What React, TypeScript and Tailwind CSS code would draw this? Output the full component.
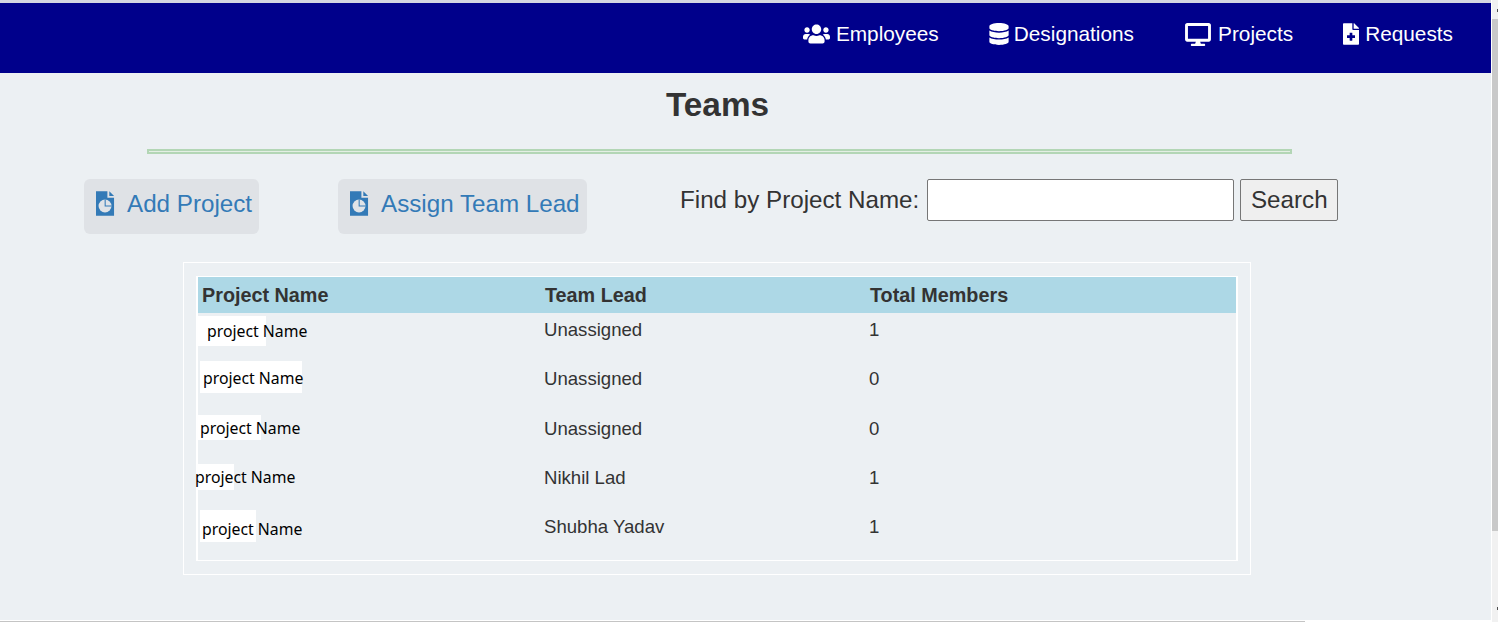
import React from 'react';
import { FaUsers, FaDatabase, FaDesktop, FaFileMedical } from 'react-icons/fa';

const navLinks = [
    { label: 'Employees', icon: <FaUsers className="w-[27px] h-[22px]" />, gap: 'gap-[6px]', mr: 'mr-[50px]' },
    { label: 'Designations', icon: <FaDatabase className="w-[20px] h-[22px]" />, gap: 'gap-[5px]', mr: 'mr-[51px]' },
    { label: 'Projects', icon: <FaDesktop className="w-[26px] h-[23px]" />, gap: 'gap-[7px]', mr: 'mr-[50px]' },
    { label: 'Requests', icon: <FaFileMedical className="w-[16px] h-[22px]" />, gap: 'gap-[6px]', mr: '' },
];

const rows = [
    { lead: 'Unassigned', total: 1, rowCls: 'h-[36px]', boxCls: 'mt-[3px] w-[69px] h-[30px] ml-[-1px] pl-[10px] pt-[2px]' },
    { lead: 'Unassigned', total: 0, rowCls: 'h-[49px] mt-[6px]', boxCls: 'mt-[6px] w-[102px] h-[32px] ml-[2px] pl-[3px] pt-[4px]' },
    { lead: 'Unassigned', total: 0, rowCls: 'h-[50px] mt-[1px]', boxCls: 'mt-[10px] w-[63px] h-[25px] pl-[2px] pt-[2px]' },
    { lead: 'Nikhil Lad', total: 1, rowCls: 'h-[48px]', boxCls: 'mt-[9px] w-[37px] h-[26px] ml-[-1px] indent-[-2px] pt-[2px]' },
    { lead: 'Shubha Yadav', total: 1, rowCls: 'h-[50px]', boxCls: 'mt-[7px] w-[56px] h-[32px] ml-[2px] pl-[2px] pt-[8px]' },
];

const ReportIcon = () => (
    <svg viewBox="0 0 20 26" className="w-[19px] h-[25px] shrink-0 mb-[2px]" fill="#337ab7">
        <path d="M0 0h12v7h7v19H0z" />
        <path d="M14 0l5 5h-5z" />
        <circle cx="9.5" cy="15.6" r="6.8" fill="#e0e3e7" />
        <path d="M10.2 8.8v6.2h6.2v1.1H9.1V8.8z" fill="#337ab7" />
    </svg>
);

const ActionLink = ({ label, cls }: { label: string; cls: string }) => (
    <a className={`flex items-center h-[55px] pb-[4px] rounded-[6px] bg-[#dfe2e6] text-[24.2px] text-[#337ab7] pl-[12px] gap-[12px] whitespace-nowrap ${cls}`}>
        <ReportIcon />
        {label}
    </a>
);

const App: React.FC = () => {
    return (
        <div className="flex w-[1498px] h-[622px] overflow-hidden bg-[#f1f1f1] font-['Liberation_Sans',Arial,sans-serif] text-[#333]">
            <div className="flex flex-col w-[1492px] h-full border-r border-white">
                <div className="h-[3px] shrink-0 bg-[#d3d6e2]" />
                <nav className="flex justify-end h-[70px] shrink-0 bg-[#00008b] text-white text-[20.8px] pr-[38px] pt-[19px]">
                    {navLinks.map(link => (
                        <a key={link.label} className={`flex items-center h-[24px] ${link.gap} ${link.mr}`}>
                            {link.icon}
                            {link.label}
                        </a>
                    ))}
                </nav>
                <main className="flex-1 bg-[#ecf0f3] min-h-0">
                    <h1 className="text-center text-[33.3px] leading-[38px] font-bold pt-[13px] h-[51px] pr-[53px] ml-[-3px]">Teams</h1>
                    <div className="ml-[147px] mt-[25px] w-[1145px] h-[5px] border-2 border-[#b3d6b5] bg-[#e4efe4]" />
                    <div className="flex mt-[25px] pl-[84px]">
                        <ActionLink label="Add Project" cls="w-[175px]" />
                        <ActionLink label="Assign Team Lead" cls="w-[249px] ml-[79px]" />
                        <form className="flex h-[42px] ml-[93px] items-center text-[24.2px]">
                            <label className="whitespace-nowrap">Find by Project Name:</label>
                            <input type="text" className="w-[307px] h-[42px] ml-[8px] bg-white border border-[#767676] rounded-[2px]" />
                            <button type="button" className="w-[98px] h-[42px] ml-[6px] bg-[#efefef] border border-[#767676] rounded-[2px]">Search</button>
                        </form>
                    </div>
                    <div className="ml-[183px] mt-[28px] w-[1068px] h-[313px] border border-white px-[12px] py-[13px]">
                        <div className="w-[1042px] h-[285px] border border-white border-x-2">
                            <div className="grid grid-cols-[347px_325px_1fr] items-center h-[36px] pt-[2px] bg-[#add8e6] text-[19.8px] font-bold">
                                <span className="pl-[4px]">Project Name</span>
                                <span>Team Lead</span>
                                <span>Total Members</span>
                            </div>
                            {rows.map((row, i) => (
                                <div key={i} className={`grid grid-cols-[346px_325px_1fr] items-center pb-[2px] text-[18.6px] ${row.rowCls}`}>
                                    <div className={`self-start flex items-center bg-white whitespace-nowrap font-['Noto_Sans',sans-serif] text-[15.8px] text-black ${row.boxCls}`}>
                                        project Name
                                    </div>
                                    <span>{row.lead}</span>
                                    <span>{row.total}</span>
                                </div>
                            ))}
                        </div>
                    </div>
                </main>
                <div className="h-[2px] shrink-0 bg-white">
                    <div className="mt-[1px] h-[1px] w-[1305px] bg-[#c4c4c4]" />
                </div>
            </div>
            <div className="w-[6px] h-full">
                <div className="mt-[9px] ml-[5px] w-[1px] h-[3px] bg-[#505050]" />
                <div className="mt-[7px] h-[512px] bg-[#c9c9c9]" />
                <div className="mt-[76px] ml-[5px] w-[1px] h-[3px] bg-[#505050]" />
            </div>
        </div>
    );
};

export default App;
